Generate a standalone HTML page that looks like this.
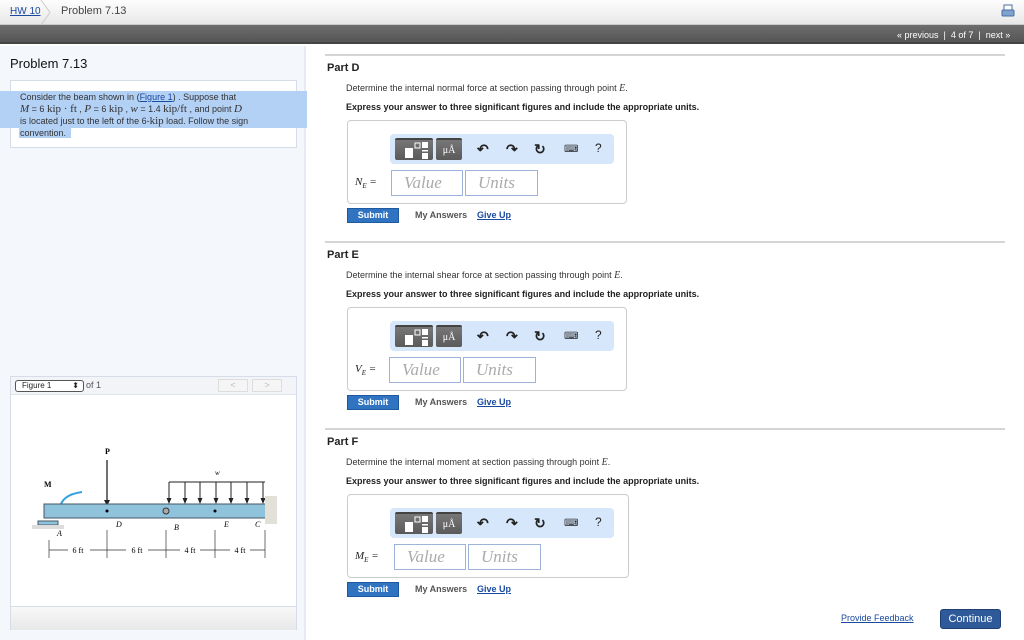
<!DOCTYPE html>
<html><head><style>
*{margin:0;padding:0;box-sizing:border-box}
body{width:1024px;height:640px;overflow:hidden;position:relative;font-family:"Liberation Sans",Arial,sans-serif;background:#fff;color:#222}
.a{position:absolute}
.top{left:0;top:0;width:1024px;height:25px;background:linear-gradient(#fdfdfd,#e8e8e8);border-bottom:1px solid #ccc}
.dark{left:0;top:25px;width:1024px;height:19px;background:linear-gradient(#6e6e6e,#555);border-bottom:2px solid #444}
.left{left:0;top:46px;width:306px;height:594px;background:#f4f7fb;border-right:2px solid #e6ebf1}
.part{left:325px;width:680px;height:187px}
.rule{left:0;top:0;width:680px;height:2px;background:#d5d5d5}
.ph{left:2px;top:8px;font-size:11px;font-weight:bold}
.det{left:21px;top:29px;font-size:9px;color:#333}
.exp{left:21px;top:48px;font-size:9px;font-weight:bold;color:#222}
.box{left:22px;top:66px;width:280px;height:84px;border:1px solid #ccc;border-radius:4px;background:#fff}
.tb{left:42px;top:13px;width:224px;height:30px;background:#d7e7fb;border-radius:4px}
.btn{top:4px;height:22px;background:linear-gradient(#777,#5a5a5a);border-radius:2px;border-top:2px solid #444}
.inp{top:49px;height:26px;border:1px solid #9db3dc;font-family:"Liberation Serif",serif;font-style:italic;font-size:17px;color:#aaa;padding:2px 0 0 12px}
.lbl{left:7px;top:55px;font-family:"Liberation Serif",serif;font-style:italic;font-size:11px}
.sub{left:22px;top:154px;width:52px;height:15px;background:#2f73c1;border:1px solid #1f5aa0;color:#fff;font-size:9px;font-weight:bold;text-align:center;line-height:13px}
.my{left:90px;top:156px;font-size:9px;font-weight:bold;color:#555}
.gu{left:152px;top:156px;font-size:9px;font-weight:bold;color:#1a4aa0;text-decoration:underline}
.ic{top:7px;font-size:14px;color:#222;font-weight:bold}
.m{font-family:"Liberation Serif",serif;font-size:11px}
</style></head><body>
<div class="a top"></div>
<div class="a" style="left:10px;top:6px;font-size:10px;color:#1a4aa0;text-decoration:underline">HW 10</div>
<svg class="a" style="left:40px;top:0" width="12" height="25"><path d="M1 0 L10 12.5 L1 25" fill="none" stroke="#ccc"/></svg>
<div class="a" style="left:61px;top:5px;font-size:11px;color:#444">Problem 7.13</div>
<svg class="a" style="left:1001px;top:4px" width="14" height="14"><rect x="3" y="1" width="8" height="5" fill="#fff" stroke="#4a6fa0"/><rect x="1" y="6" width="12" height="6" rx="1" fill="#7da3cf" stroke="#4a6fa0"/></svg>
<div class="a dark"></div>
<div class="a" style="left:897px;top:30px;font-size:9px;color:#fff">« previous &nbsp;|&nbsp; 4 of 7 &nbsp;|&nbsp; next »</div>
<div class="a left"></div>
<div class="a" style="left:10px;top:56px;font-size:13px;color:#111">Problem 7.13</div>
<div class="a" style="left:10px;top:80px;width:287px;height:68px;background:#fff;border:1px solid #d6dde8"></div>
<div class="a" style="left:0;top:91px;width:307px;height:37px;background:#b3d0f5"></div>
<div class="a" style="left:19px;top:127px;width:52px;height:11px;background:#b3d0f5"></div>
<div class="a" style="left:20px;top:91px;font-size:9px;line-height:12px;color:#333;white-space:nowrap">Consider the beam shown in (<span style="color:#1a4aa0;text-decoration:underline">Figure 1</span>) . Suppose that<br><i class="m">M</i> = 6 <span class="m">kip · ft</span> , <i class="m">P</i> = 6 <span class="m">kip</span> , <i class="m">w</i> = 1.4 <span class="m">kip/ft</span> , and point <i class="m">D</i><br>is located just to the left of the 6-<span class="m">kip</span> load. Follow the sign<br>convention.</div>

<div class="a" style="left:10px;top:376px;width:287px;height:254px;background:#fff;border:1px solid #d6dde8"></div>
<div class="a" style="left:11px;top:377px;width:285px;height:18px;background:#f2f4f7;border-bottom:1px solid #dde3ea"></div>
<div class="a" style="left:15px;top:380px;width:69px;height:12px;border:1px solid #555;border-radius:3px;font-size:8px;padding-left:6px;line-height:10px;background:#fff">Figure 1<span style="float:right;margin-right:4px">⬍</span></div>
<div class="a" style="left:86px;top:380px;font-size:9px;color:#555">of 1</div>
<div class="a" style="left:218px;top:379px;width:30px;height:13px;border:1px solid #ddd;background:#f5f5f5;font-size:9px;color:#bbb;text-align:center">&lt;</div>
<div class="a" style="left:252px;top:379px;width:30px;height:13px;border:1px solid #ddd;background:#f5f5f5;font-size:9px;color:#bbb;text-align:center">&gt;</div>
<div class="a" style="left:11px;top:606px;width:285px;height:24px;background:linear-gradient(#f8f8f8,#e8e8e8);border-top:1px solid #d6dde8"></div>
<svg class="a" style="left:30px;top:440px" width="250" height="130" font-family="Liberation Serif,serif">
<text x="75" y="14" font-size="8" font-weight="bold">P</text>
<line x1="77" y1="20" x2="77" y2="62" stroke="#222" stroke-width="1.3"/><path d="M74 60 L77 66 L80 60Z" fill="#222"/>
<text x="185" y="35" font-size="7" font-style="italic">w</text>
<line x1="139" y1="42" x2="235" y2="42" stroke="#222"/>
<g stroke="#222"><line x1="139" y1="42" x2="139" y2="60"/><line x1="155" y1="42" x2="155" y2="60"/><line x1="170" y1="42" x2="170" y2="60"/><line x1="186" y1="42" x2="186" y2="60"/><line x1="201" y1="42" x2="201" y2="60"/><line x1="217" y1="42" x2="217" y2="60"/><line x1="233" y1="42" x2="233" y2="60"/></g>
<g fill="#222"><path d="M136.5 58L139 64L141.5 58Z"/><path d="M152.5 58L155 64L157.5 58Z"/><path d="M167.5 58L170 64L172.5 58Z"/><path d="M183.5 58L186 64L188.5 58Z"/><path d="M198.5 58L201 64L203.5 58Z"/><path d="M214.5 58L217 64L219.5 58Z"/><path d="M230.5 58L233 64L235.5 58Z"/></g>
<text x="14" y="47" font-size="8" font-weight="bold">M</text>
<path d="M30 70 Q30 55 52 52" fill="none" stroke="#39a2e0" stroke-width="2"/><path d="M26 66 L30 74 L34 66Z" fill="#39a2e0"/>
<rect x="14" y="64" width="222" height="14" fill="#8fc3dc" stroke="#456"/>
<rect x="235" y="56" width="12" height="28" fill="#e3e0d8"/>
<circle cx="77" cy="71" r="1.5"/><circle cx="185" cy="71" r="1.5"/><circle cx="136" cy="71" r="3" fill="#aaa" stroke="#333"/>
<rect x="8" y="81" width="20" height="4" fill="#8fc3dc" stroke="#456"/><rect x="2" y="85" width="32" height="4" fill="#ddd"/>
<g font-size="8" font-style="italic"><text x="86" y="87">D</text><text x="144" y="90">B</text><text x="194" y="87">E</text><text x="225" y="87">C</text><text x="27" y="96">A</text></g>
<g stroke="#333" stroke-width=".7"><line x1="19" y1="110" x2="235" y2="110"/><line x1="19" y1="100" x2="19" y2="118"/><line x1="77" y1="90" x2="77" y2="118"/><line x1="136" y1="90" x2="136" y2="118"/><line x1="185" y1="90" x2="185" y2="118"/><line x1="235" y1="90" x2="235" y2="118"/></g>
<g font-size="8" text-anchor="middle"><rect x="38" y="105" width="22" height="9" fill="#fff"/><text x="48" y="113">6 ft</text><rect x="96" y="105" width="22" height="9" fill="#fff"/><text x="107" y="113">6 ft</text><rect x="150" y="105" width="20" height="9" fill="#fff"/><text x="160" y="113">4 ft</text><rect x="200" y="105" width="20" height="9" fill="#fff"/><text x="210" y="113">4 ft</text></g>
</svg>

<!-- parts -->
<div class="a part" style="top:54px">
<div class="a rule"></div><div class="a ph">Part D</div>
<div class="a det">Determine the internal normal force at section passing through point <i style="font-family:'Liberation Serif',serif;font-size:10px">E</i>.</div>
<div class="a exp">Express your answer to three significant figures and include the appropriate units.</div>
<div class="a box"><div class="a tb"><div class="a btn" style="left:5px;width:38px"><svg width="38" height="20"><rect x="10" y="8" width="8" height="10" fill="#fff"/><rect x="20" y="3" width="5" height="5" fill="none" stroke="#fff"/><rect x="27" y="2" width="6" height="6" fill="#fff"/><rect x="27" y="10" width="6" height="1.5" fill="#fff"/><rect x="27" y="13" width="6" height="6" fill="#fff"/></svg></div><div class="a btn" style="left:46px;width:26px;color:#fff;font-size:10px;text-align:center;line-height:22px;font-family:'Liberation Serif',serif">μÅ</div><div class="a ic" style="left:87px">↶</div><div class="a ic" style="left:116px">↷</div><div class="a ic" style="left:144px">↻</div><div class="a ic" style="left:174px;font-size:10px;top:10px;font-weight:normal">⌨</div><div class="a ic" style="left:205px;font-size:12px;font-weight:normal">?</div></div>
<div class="a lbl"><i>N<sub style="font-size:7px">E</sub></i> =</div><div class="a inp" style="left:43px;width:72px">Value</div><div class="a inp" style="left:117px;width:73px">Units</div></div>
<div class="a sub">Submit</div><div class="a my">My Answers</div><div class="a gu">Give Up</div>
</div>
<div class="a part" style="top:241px">
<div class="a rule"></div><div class="a ph">Part E</div>
<div class="a det">Determine the internal shear force at section passing through point <i style="font-family:'Liberation Serif',serif;font-size:10px">E</i>.</div>
<div class="a exp">Express your answer to three significant figures and include the appropriate units.</div>
<div class="a box"><div class="a tb"><div class="a btn" style="left:5px;width:38px"><svg width="38" height="20"><rect x="10" y="8" width="8" height="10" fill="#fff"/><rect x="20" y="3" width="5" height="5" fill="none" stroke="#fff"/><rect x="27" y="2" width="6" height="6" fill="#fff"/><rect x="27" y="10" width="6" height="1.5" fill="#fff"/><rect x="27" y="13" width="6" height="6" fill="#fff"/></svg></div><div class="a btn" style="left:46px;width:26px;color:#fff;font-size:10px;text-align:center;line-height:22px;font-family:'Liberation Serif',serif">μÅ</div><div class="a ic" style="left:87px">↶</div><div class="a ic" style="left:116px">↷</div><div class="a ic" style="left:144px">↻</div><div class="a ic" style="left:174px;font-size:10px;top:10px;font-weight:normal">⌨</div><div class="a ic" style="left:205px;font-size:12px;font-weight:normal">?</div></div>
<div class="a lbl"><i>V<sub style="font-size:7px">E</sub></i> =</div><div class="a inp" style="left:41px;width:72px">Value</div><div class="a inp" style="left:115px;width:73px">Units</div></div>
<div class="a sub">Submit</div><div class="a my">My Answers</div><div class="a gu">Give Up</div>
</div>
<div class="a part" style="top:428px">
<div class="a rule"></div><div class="a ph">Part F</div>
<div class="a det">Determine the internal moment at section passing through point <i style="font-family:'Liberation Serif',serif;font-size:10px">E</i>.</div>
<div class="a exp">Express your answer to three significant figures and include the appropriate units.</div>
<div class="a box" style="width:282px"><div class="a tb"><div class="a btn" style="left:5px;width:38px"><svg width="38" height="20"><rect x="10" y="8" width="8" height="10" fill="#fff"/><rect x="20" y="3" width="5" height="5" fill="none" stroke="#fff"/><rect x="27" y="2" width="6" height="6" fill="#fff"/><rect x="27" y="10" width="6" height="1.5" fill="#fff"/><rect x="27" y="13" width="6" height="6" fill="#fff"/></svg></div><div class="a btn" style="left:46px;width:26px;color:#fff;font-size:10px;text-align:center;line-height:22px;font-family:'Liberation Serif',serif">μÅ</div><div class="a ic" style="left:87px">↶</div><div class="a ic" style="left:116px">↷</div><div class="a ic" style="left:144px">↻</div><div class="a ic" style="left:174px;font-size:10px;top:10px;font-weight:normal">⌨</div><div class="a ic" style="left:205px;font-size:12px;font-weight:normal">?</div></div>
<div class="a lbl"><i>M<sub style="font-size:7px">E</sub></i> =</div><div class="a inp" style="left:46px;width:72px">Value</div><div class="a inp" style="left:120px;width:73px">Units</div></div>
<div class="a sub">Submit</div><div class="a my">My Answers</div><div class="a gu">Give Up</div>
</div>
<div class="a" style="left:841px;top:613px;font-size:9px;color:#1a4aa0;text-decoration:underline">Provide Feedback</div>
<div class="a" style="left:940px;top:609px;width:61px;height:20px;background:#2e5a9a;border:1px solid #1e3f70;border-radius:3px;color:#fff;font-size:11px;text-align:center;line-height:18px">Continue</div>
</body></html>
